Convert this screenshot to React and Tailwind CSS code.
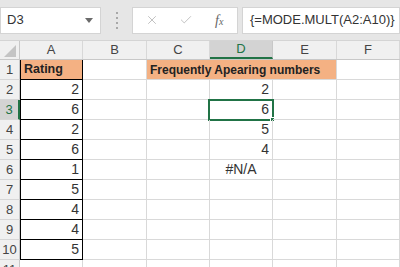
import { Check, X } from 'lucide-react';

const cols = ['A', 'B', 'C', 'D', 'E', 'F'];
const ratings = [null, 2, 6, 2, 6, 1, 5, 4, 4, 5];
const freq = { 2: 2, 3: 6, 4: 5, 5: 4 };

function RowHead({ n, active }) {
  return (
    <div
      className={`flex items-center justify-center border-b border-[#d6d6d6] text-[13px] ${
        active ? 'bg-[#d3d3d3] text-[#217346] border-r-2 border-r-[#217346]' : 'bg-[#f0f0f0] text-[#444] border-r border-r-[#c8c8c8]'
      }`}
    >
      {n}
    </div>
  );
}

function Cell({ children, className = '' }) {
  return <div className={`relative flex items-center border-r border-b border-[#d9d9d9] px-[3px] text-[14px] text-[#333] ${className}`}>{children}</div>;
}

export default function App() {
  const rows = [];
  for (let r = 1; r <= 11; r++) {
    rows.push(<RowHead key={`h${r}`} n={r} active={r === 3} />);
    if (r === 1) {
      rows.push(
        <Cell key="a1" className="border-l border-l-black !border-r-black !border-b-black bg-[#f4b183] font-bold !text-[12.5px] !text-[#222]">
          Rating
        </Cell>
      );
      rows.push(<Cell key="b1" />);
      rows.push(
        <Cell key="c1" className="col-span-3 bg-[#f4b183] font-bold !text-[12px] !text-[#222] whitespace-nowrap">
          Frequently Apearing numbers
        </Cell>
      );
      rows.push(<Cell key="f1" />);
      continue;
    }
    const a = ratings[r - 1];
    rows.push(
      <Cell
        key={`a${r}`}
        className={r <= 10 ? 'justify-end border-l border-l-black !border-r-black !border-b-black' : 'justify-end'}
      >
        {a}
      </Cell>
    );
    rows.push(<Cell key={`b${r}`} />);
    rows.push(<Cell key={`c${r}`} />);
    rows.push(
      <Cell key={`d${r}`} className={r === 6 ? 'justify-center' : 'justify-end'}>
        {r === 6 ? '#N/A' : freq[r]}
        {r === 3 && (
          <div className="absolute -left-[2px] -top-[1px] h-[22px] w-[66px] border-2 border-[#217346]">
            <div className="absolute -bottom-[3px] -right-[3px] h-[5px] w-[5px] border border-white bg-[#217346]" />
          </div>
        )}
      </Cell>
    );
    rows.push(<Cell key={`e${r}`} />);
    rows.push(<Cell key={`f${r}`} />);
  }

  return (
    <div className="h-[267px] w-[400px] overflow-hidden bg-white" style={{ fontFamily: '"Liberation Sans", Arial, sans-serif' }}>
      <div className="flex h-[41px] items-center bg-[#e6e6e6] border-b border-[#d4d4d4]">
        <div className="flex h-[27px] w-[101px] items-center justify-between border border-[#d4d4d4] bg-white pl-[6px] pr-[7px] text-[13px] text-[#333]">
          <span>D3</span>
          <svg width="8" height="5" viewBox="0 0 8 5">
            <path d="M0 0h8L4 5z" fill="#6b6b6b" />
          </svg>
        </div>
        <div className="flex w-[31px] flex-col items-center gap-[3px]">
          <span className="h-[2px] w-[2px] bg-[#a8a8a8]" />
          <span className="h-[2px] w-[2px] bg-[#a8a8a8]" />
          <span className="h-[2px] w-[2px] bg-[#a8a8a8]" />
          <span className="h-[2px] w-[2px] bg-[#a8a8a8]" />
        </div>
        <div className="flex h-[27px] w-[106px] items-center border border-[#d4d4d4] bg-white">
          <X className="ml-[12px] h-[14px] w-[14px] text-[#bdbdbd]" strokeWidth={1.6} />
          <Check className="ml-[20px] h-[14px] w-[14px] text-[#bdbdbd]" strokeWidth={1.6} />
          <span className="ml-[22px] text-[14px] italic text-[#666]" style={{ fontFamily: '"Liberation Serif", serif' }}>
            f<span className="text-[10px]">x</span>
          </span>
        </div>
        <div className="ml-[4px] flex h-[27px] flex-1 items-center border border-[#d4d4d4] bg-white pl-[7px] text-[13px] text-[#333] whitespace-nowrap">
          {'{=MODE.MULT(A2:A10)}'}
        </div>
      </div>
      <div className="grid grid-cols-[20px_63px_64px_63px_63px_64px_1fr] grid-rows-[18px] bg-[#f0f0f0] border-b border-[#c8c8c8] h-[19px]">
        <div className="relative border-r border-[#c8c8c8]">
          <svg className="absolute bottom-[2px] right-[3px]" width="12" height="12" viewBox="0 0 12 12">
            <path d="M12 0V12H0z" fill="#c4c4c4" />
          </svg>
        </div>
        {cols.map((c) => (
          <div
            key={c}
            className={`flex items-center justify-center border-r text-[13px] ${
              c === 'D' ? 'bg-[#d3d3d3] text-[#217346] border-b-2 border-b-[#217346] border-r-[#c8c8c8]' : 'text-[#444] border-r-[#d8d8d8]'
            }`}
          >
            {c}
          </div>
        ))}
      </div>
      <div className="grid grid-cols-[20px_63px_64px_63px_63px_64px_1fr] auto-rows-[20px]">{rows}</div>
    </div>
  );
}
